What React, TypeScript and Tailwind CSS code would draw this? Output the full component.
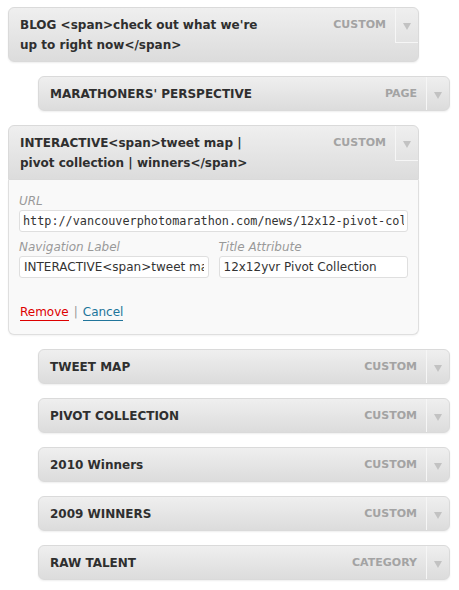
import { useState } from 'react';

interface MenuItem {
  id: number;
  title: string;
  type: string;
  depth: number;
  url?: string;
  label?: string;
  attr?: string;
}

const items: MenuItem[] = [
  { id: 1, title: "BLOG <span>check out what we're up to right now</span>", type: 'CUSTOM', depth: 0 },
  { id: 2, title: "MARATHONERS' PERSPECTIVE", type: 'PAGE', depth: 1 },
  {
    id: 3,
    title: 'INTERACTIVE<span>tweet map | pivot collection | winners</span>',
    type: 'CUSTOM',
    depth: 0,
    url: 'http://vancouverphotomarathon.com/news/12x12-pivot-collection/',
    label: 'INTERACTIVE<span>tweet map | pivot collection | winners</span>',
    attr: '12x12yvr Pivot Collection',
  },
  { id: 4, title: 'TWEET MAP', type: 'CUSTOM', depth: 1 },
  { id: 5, title: 'PIVOT COLLECTION', type: 'CUSTOM', depth: 1 },
  { id: 6, title: '2010 Winners', type: 'CUSTOM', depth: 1 },
  { id: 7, title: '2009 WINNERS', type: 'CUSTOM', depth: 1 },
  { id: 8, title: 'RAW TALENT', type: 'CATEGORY', depth: 1 },
];

function Arrow() {
  return (
    <div className="-mb-[2px] flex h-[35px] w-[23px] shrink-0 items-center justify-center border-b border-l border-[#f6f6f6] pt-[3px]">
      <svg width="8" height="7" viewBox="0 0 8 7">
        <path d="M0 0 L8 0 L4 7 Z" fill="#c2c2c2" />
      </svg>
    </div>
  );
}

function Handle({ item, open }: { item: MenuItem; open: boolean }) {
  return (
    <div
      className={`flex items-start overflow-hidden border border-[#dadada] bg-gradient-to-b from-[#efefef] to-[#dcdcdc] ${
        open ? 'rounded-t-[6px]' : 'rounded-[6px] shadow-[0_1px_2px_rgba(0,0,0,0.07)]'
      }`}
    >
      <div className="flex-1 pb-[6px] pl-[11px] pt-[7px]">
        <div className="max-w-[245px] text-[12px] font-bold leading-[20px] text-[#2f2f2f]">{item.title}</div>
      </div>
      <div className="mr-[9px] pt-[7px] text-[11px] font-bold leading-[20px] text-[#a3a3a3]">{item.type}</div>
      <Arrow />
    </div>
  );
}

function Settings({ item }: { item: MenuItem }) {
  return (
    <div className="rounded-b-[6px] border border-t-0 border-[#dfdfdf] bg-[#f9f9f9] px-[10px] pb-[13px] pt-[13px] shadow-[0_1px_2px_rgba(0,0,0,0.05)]">
      <label className="block">
        <span className="mb-[1px] block text-[12px] italic leading-[16px] text-[#999]">URL</span>
        <input
          defaultValue={item.url}
          className="block h-[22px] w-full rounded-[3px] border border-[#dfdfdf] bg-white px-[3px] font-['DejaVu_Sans_Mono',monospace] text-[11.8px] text-[#333] outline-none"
        />
      </label>
      <div className="mt-[7px] flex gap-[10px]">
        <label className="block flex-1">
          <span className="mb-[1px] block text-[12px] italic leading-[16px] text-[#999]">Navigation Label</span>
          <input
            defaultValue={item.label}
            className="block h-[22px] w-full rounded-[3px] border border-[#dfdfdf] bg-white px-[4px] text-[12px] text-[#333] outline-none"
          />
        </label>
        <label className="block flex-1">
          <span className="mb-[1px] block text-[12px] italic leading-[16px] text-[#999]">Title Attribute</span>
          <input
            defaultValue={item.attr}
            className="block h-[22px] w-full rounded-[3px] border border-[#dfdfdf] bg-white px-[4px] text-[12px] text-[#333] outline-none"
          />
        </label>
      </div>
      <div className="mt-[26px] flex items-start text-[12px] leading-[16px]">
        <a href="#" className="ml-[1px] border-b border-[#d00] text-[#d00]">Remove</a>
        <span className="mx-[5px] text-[#999]">|</span>
        <a href="#" className="border-b border-[#21759b] text-[#21759b]">Cancel</a>
      </div>
    </div>
  );
}

export default function App() {
  const [openId] = useState(3);

  return (
    <div className="min-h-[590px] w-[459px] bg-white pl-[8px] pt-[7px] font-['DejaVu_Sans',Verdana,sans-serif]">
      <ul className="flex flex-col gap-[14px]">
        {items.map((item) => (
          <li key={item.id} className={item.depth ? 'ml-[30px] w-[412px]' : 'w-[411px]'}>
            <Handle item={item} open={item.id === openId} />
            {item.id === openId && <Settings item={item} />}
          </li>
        ))}
      </ul>
    </div>
  );
}
